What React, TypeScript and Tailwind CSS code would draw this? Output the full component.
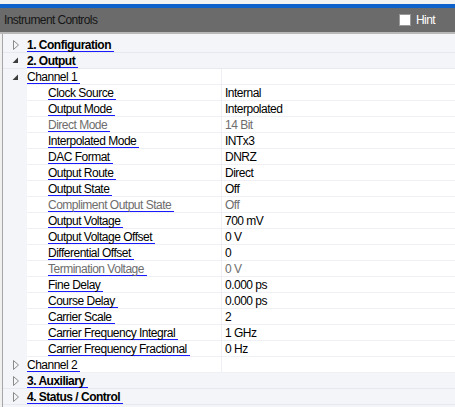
import React from "react";

type Row =
  | { kind: "cat"; label: string; open: boolean }
  | { kind: "chan"; label: string; open: boolean }
  | { kind: "prop"; label: string; value: string; disabled?: boolean };

const rows: Row[] = [
  { kind: "cat", label: "1. Configuration", open: false },
  { kind: "cat", label: "2. Output", open: true },
  { kind: "chan", label: "Channel 1", open: true },
  { kind: "prop", label: "Clock Source", value: "Internal" },
  { kind: "prop", label: "Output Mode", value: "Interpolated" },
  { kind: "prop", label: "Direct Mode", value: "14 Bit", disabled: true },
  { kind: "prop", label: "Interpolated Mode", value: "INTx3" },
  { kind: "prop", label: "DAC Format", value: "DNRZ" },
  { kind: "prop", label: "Output Route", value: "Direct" },
  { kind: "prop", label: "Output State", value: "Off" },
  { kind: "prop", label: "Compliment Output State", value: "Off", disabled: true },
  { kind: "prop", label: "Output Voltage", value: "700 mV" },
  { kind: "prop", label: "Output Voltage Offset", value: "0 V" },
  { kind: "prop", label: "Differential Offset", value: "0" },
  { kind: "prop", label: "Termination Voltage", value: "0 V", disabled: true },
  { kind: "prop", label: "Fine Delay", value: "0.000 ps" },
  { kind: "prop", label: "Course Delay", value: "0.000 ps" },
  { kind: "prop", label: "Carrier Scale", value: "2" },
  { kind: "prop", label: "Carrier Frequency Integral", value: "1 GHz" },
  { kind: "prop", label: "Carrier Frequency Fractional", value: "0 Hz" },
  { kind: "chan", label: "Channel 2", open: false },
  { kind: "cat", label: "3. Auxiliary", open: false },
  { kind: "cat", label: "4. Status / Control", open: false },
];

function Glyph({ open }: { open: boolean }) {
  if (open) {
    return (
      <svg width="7" height="7" viewBox="0 0 7 7" className="block">
        <polygon points="6,0.5 6,6 0.5,6" fill="#3c3c3c" />
      </svg>
    );
  }
  return (
    <svg width="6" height="10" viewBox="0 0 6 10" className="block">
      <polygon points="0.5,0.5 5.5,5 0.5,9.5" fill="none" stroke="#8a8a8a" strokeWidth="1" />
    </svg>
  );
}

function Label({ text, bold, disabled }: { text: string; bold?: boolean; disabled?: boolean }) {
  return (
    <span
      className={`inline-block mt-[3px] leading-[11px] border-b border-[#1a1aff] pr-[3px] whitespace-nowrap ${
        bold ? "font-bold text-black" : disabled ? "text-[#6d6d6d]" : "text-black"
      }`}
    >
      {text}
    </span>
  );
}

export default function App() {
  return (
    <div
      className="w-[455px] h-[407px] overflow-hidden bg-[#f0f0f0] text-[12px] tracking-[-0.5px]"
      style={{ fontFamily: '"Liberation Sans", Arial, sans-serif' }}
    >
      <div className="h-[4px] bg-[#f3f3f3]" />
      <div className="h-[4px] bg-[#0f62c9]" />
      <div className="h-[24px] bg-[#6b6b6b] flex items-center justify-between pl-[4px] pr-[20px] tracking-[-0.6px]">
        <span className="text-[#161616]">Instrument Controls</span>
        <div className="flex items-center gap-[5px]">
          <div className="w-[12px] h-[12px] bg-white border border-[#9a9a9a]" />
          <span className="text-white">Hint</span>
        </div>
      </div>
      <div className="h-[2px] bg-[#b9b9b9]" />
      <div className="flex h-[373px] pl-[2px]">
        <div className="w-[1px] bg-[#a6a6a6]" />
        <div className="flex-1 flex flex-col bg-[#f3f5f9] pt-[3px]">
          {rows.map((r, i) => {
            if (r.kind === "cat") {
              return (
                <div key={i} className="h-[16px] flex border-b border-[#e6e9f0] bg-[#f3f5f9]">
                  <div className="w-[24px] flex items-center justify-center pl-[1px]">
                    <Glyph open={r.open} />
                  </div>
                  <Label text={r.label} bold />
                </div>
              );
            }
            if (r.kind === "chan") {
              return (
                <div key={i} className="h-[16px] flex">
                  <div className="w-[24px] flex items-center justify-center pl-[1px]">
                    <Glyph open={r.open} />
                  </div>
                  <div className="w-[194px] bg-white flex border-b border-[#eef0f6]">
                    <Label text={r.label} />
                  </div>
                  <div className="w-[1px] bg-[#eef0f6]" />
                  <div className="flex-1 bg-white border-b border-[#eef0f6]" />
                </div>
              );
            }
            return (
              <div key={i} className="h-[16px] flex">
                <div className="w-[24px]" />
                <div className="w-[194px] bg-white flex border-b border-[#eef0f6] pl-[21px]">
                  <Label text={r.label} disabled={r.disabled} />
                </div>
                <div className="w-[1px] bg-[#eef0f6]" />
                <div
                  className={`flex-1 bg-white flex border-b border-[#eef0f6] pl-[3px] ${
                    r.disabled ? "text-[#6d6d6d]" : "text-black"
                  }`}
                >
                  <span className="mt-[3px] leading-[11px]">{r.value}</span>
                </div>
              </div>
            );
          })}
        </div>
      </div>
    </div>
  );
}
